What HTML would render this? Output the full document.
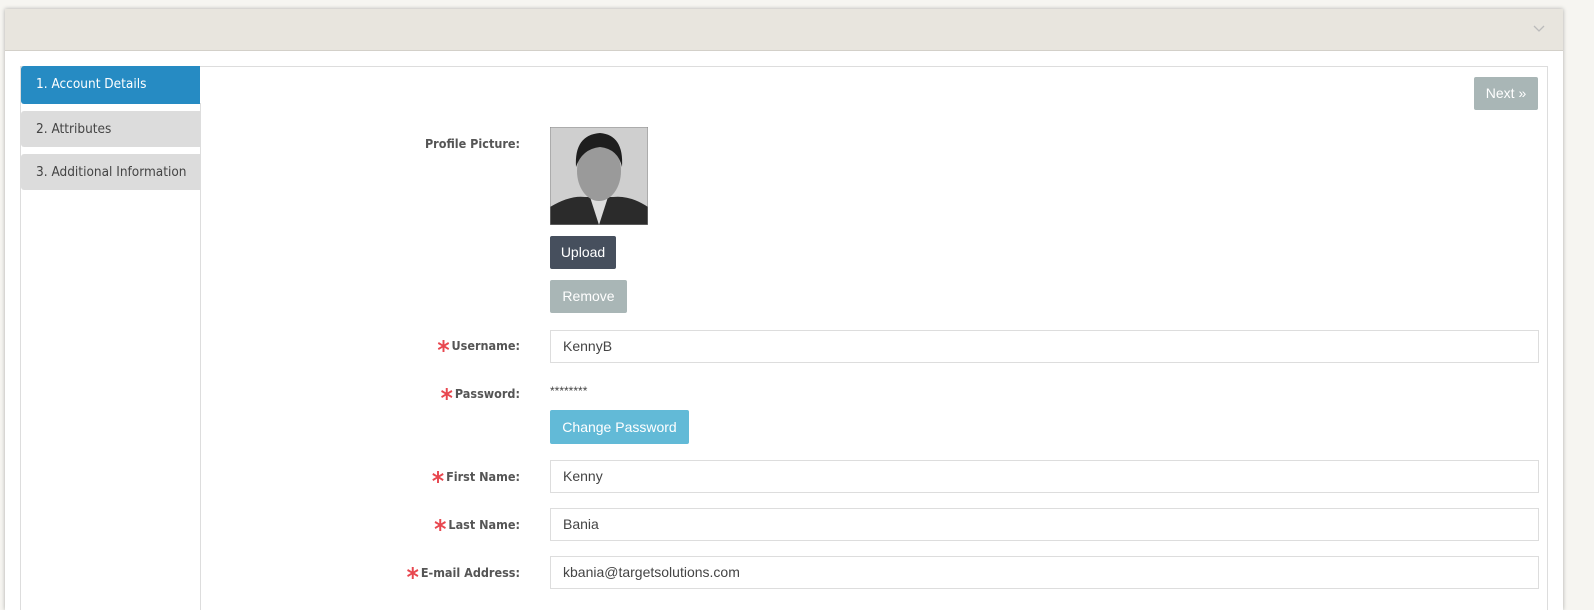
<!DOCTYPE html>
<html><head><style>
html,body{margin:0;width:1594px;height:610px;overflow:hidden}
body{background:#f6f5f1;font-family:"Liberation Sans",sans-serif;position:relative}
.panel{position:absolute;left:5px;top:9px;width:1558px;height:601px;background:#fff;box-shadow:0 0 4px rgba(0,0,0,.3)}
.hdr{height:41px;background:#e8e5de;border-bottom:1px solid #d3d0c9}
.box{position:absolute;left:20px;top:66px;width:1526px;height:544px;border:1px solid #ddd;border-bottom:none}
.tabs{position:absolute;left:0;top:0;width:179px}
.tab{height:36px;line-height:36px;padding-left:15px;font-size:13.5px;color:#444;background:#dcdcdc;border-radius:3px 0 0 3px;margin-bottom:7px;font-family:"DejaVu Sans Condensed","Liberation Sans",sans-serif}
.tab.act{background:#268bc3;color:#fff;margin-top:-1px;height:38px}
.vline{position:absolute;left:179px;top:36px;bottom:0;border-left:1px solid #ddd}
.lbl{position:absolute;right:1027px;font-size:12.5px;font-weight:bold;color:#555;font-family:"DejaVu Sans Condensed","Liberation Sans",sans-serif;text-align:right;white-space:nowrap}
.lbl b{color:#e8474f;font-size:26px;vertical-align:-9px;margin-right:2px;line-height:10px}
.inp{position:absolute;left:529px;width:975px;height:31px;border:1px solid #ddd;font-size:14px;color:#444;line-height:31px;padding-left:12px;box-sizing:content-box}
.btn{position:absolute;color:#fff;font-size:14px;text-align:center;border-radius:2px}
</style></head><body>
<div class="panel"><div class="hdr"><svg style="position:absolute;left:1528px;top:16px" width="12" height="8"><path d="M1 1l5 5 5-5" stroke="#bbb" fill="none" stroke-width="1.3"/></svg></div></div>
<div class="box">
 <div class="tabs"><div class="tab act">1. Account Details</div><div class="tab">2. Attributes</div><div class="tab">3. Additional Information</div></div>
 <div class="vline"></div>
 <div class="btn" style="left:1453px;top:10px;width:64px;height:33px;line-height:33px;background:#a9b6b6">Next »</div>
 <div class="lbl" style="top:69px">Profile Picture:</div>
 <svg style="position:absolute;left:529px;top:60px" width="98" height="98"><rect width="98" height="98" fill="#cfcfcf"/><path d="M0 98 L0 80 Q20 68 35 70 L63 70 Q80 68 98 80 L98 98Z" fill="#2b2b2b"/><path d="M40 70 L49 98 L58 70Z" fill="#ddd"/><ellipse cx="49" cy="44" rx="22" ry="30" fill="#9a9a9a"/><path d="M26 40 Q24 8 50 6 Q74 8 72 40 Q68 22 50 20 Q32 22 26 40Z" fill="#1e1e1e"/><rect x="0" y="0" width="98" height="98" fill="none" stroke="#888"/></svg>
 <div class="btn" style="left:529px;top:169px;width:66px;height:33px;line-height:33px;background:#464f5d">Upload</div>
 <div class="btn" style="left:529px;top:213px;width:77px;height:33px;line-height:33px;background:#a9b6b6">Remove</div>
 <div class="lbl" style="top:271px"><b>*</b>Username:</div>
 <div class="inp" style="top:263px">KennyB</div>
 <div class="lbl" style="top:319px"><b>*</b>Password:</div>
 <div style="position:absolute;left:529px;top:317px;font-size:12px;color:#444">********</div>
 <div class="btn" style="left:529px;top:343px;width:139px;height:34px;line-height:34px;background:#62bad7">Change Password</div>
 <div class="lbl" style="top:402px"><b>*</b>First Name:</div>
 <div class="inp" style="top:393px">Kenny</div>
 <div class="lbl" style="top:450px"><b>*</b>Last Name:</div>
 <div class="inp" style="top:441px">Bania</div>
 <div class="lbl" style="top:498px"><b>*</b>E-mail Address:</div>
 <div class="inp" style="top:489px">kbania@targetsolutions.com</div>
</div>
</body></html>
